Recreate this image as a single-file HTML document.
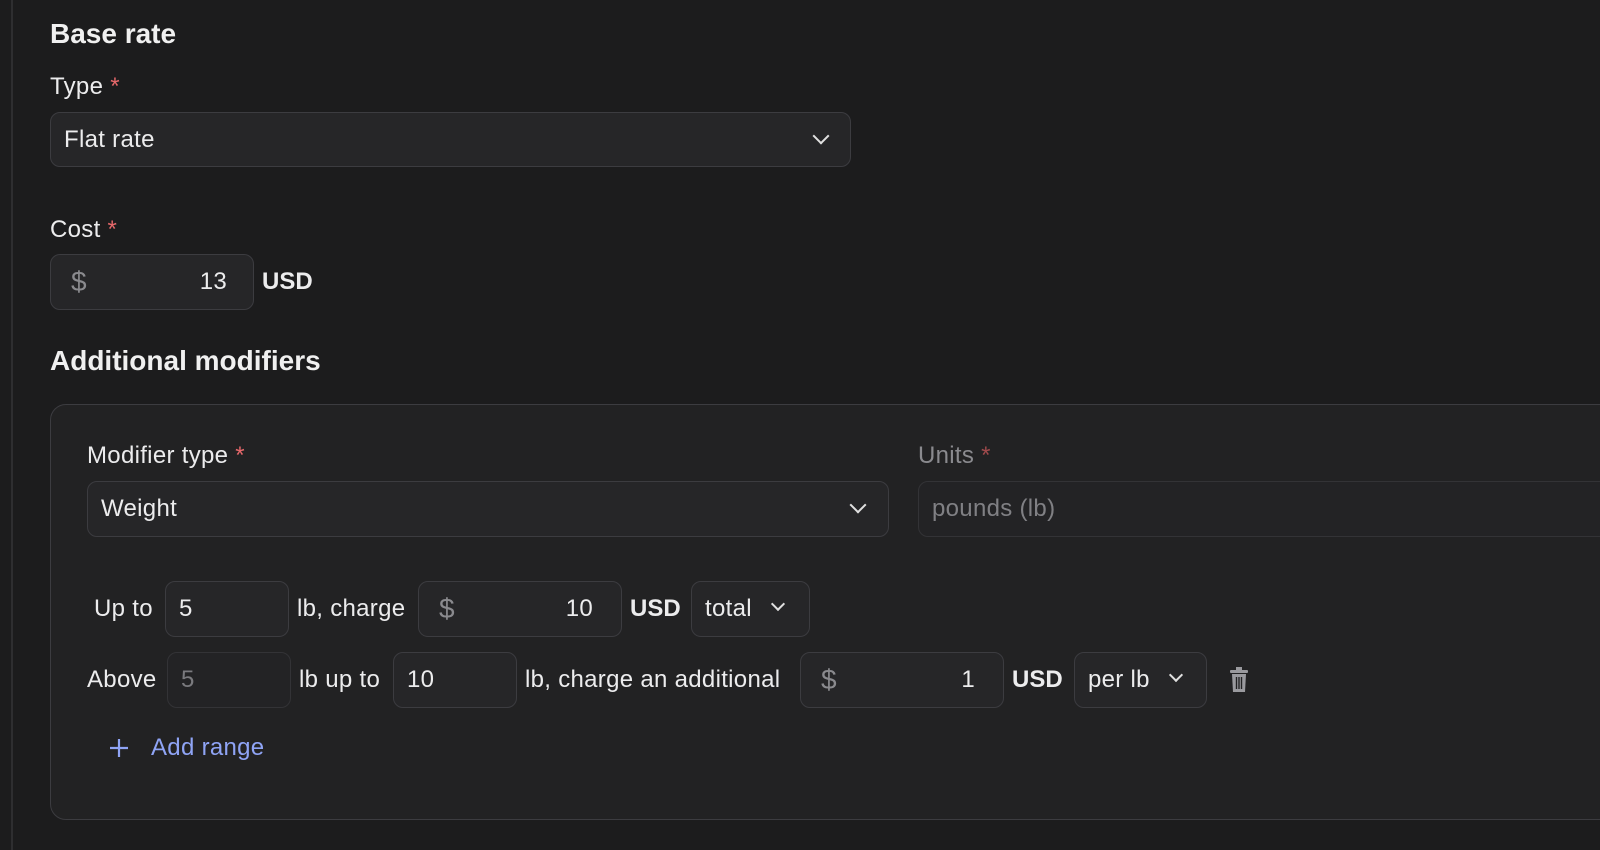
<!DOCTYPE html>
<html><head><style>
*{box-sizing:border-box;margin:0;padding:0}
body{width:1600px;height:850px;background:#1c1c1d;font-family:"Liberation Sans",sans-serif;color:#ececed;position:relative;overflow:hidden;font-size:24px;letter-spacing:0.3px}
.a{position:absolute;white-space:nowrap;line-height:28px}
.vl{position:absolute;left:11px;top:0;width:2px;height:850px;background:#2e2e30}
h2{position:absolute;font-size:28px;font-weight:bold;color:#f0f0f0;line-height:32px;letter-spacing:0}
.lbl{position:absolute;font-size:24px;line-height:28px}
.req{color:#e5686a}
.box{position:absolute;background:#262628;border:1.5px solid #3c3c40;border-radius:10px;display:flex;align-items:center;padding:0 13px;font-size:24px}
.card{position:absolute;left:50px;top:404px;width:1600px;height:416px;background:#222223;border:1.5px solid #3c3c40;border-radius:16px}
.chev{position:absolute;width:12px;height:12px;border-right:2px solid #e0e0e0;border-bottom:2px solid #e0e0e0;transform:rotate(45deg)}
.d{color:#8a8a8e}
.b{font-weight:bold;letter-spacing:0}
</style></head><body>
<div class="vl"></div>
<h2 style="left:50px;top:18px">Base rate</h2>
<div class="lbl" style="left:50px;top:73px">Type <span class="req">*</span></div>
<div class="box" style="left:50px;top:112px;width:801px;height:55px">Flat rate</div>
<div class="chev" style="left:815px;top:130px"></div>
<div class="lbl" style="left:50px;top:216px">Cost <span class="req">*</span></div>
<div class="box" style="left:50px;top:254px;width:204px;height:56px;justify-content:space-between;padding:0 26px 0 20px"><span class="d" style="font-size:28px">$</span><span>13</span></div>
<div class="a b" style="left:262px;top:268px">USD</div>
<h2 style="left:50px;top:345px">Additional modifiers</h2>
<div class="card"></div>
<div class="lbl" style="left:87px;top:442px">Modifier type <span class="req">*</span></div>
<div class="box" style="left:87px;top:481px;width:802px;height:56px">Weight</div>
<div class="chev" style="left:852px;top:499px"></div>
<div class="lbl" style="left:918px;top:442px;color:#8a8a8e">Units <span style="color:#a04a4c">*</span></div>
<div class="box" style="left:918px;top:481px;width:700px;height:56px;background:#232325;border-color:#333336;color:#808084">pounds (lb)</div>

<div class="a" style="left:94px;top:595px">Up to</div>
<div class="box" style="left:165px;top:581px;width:124px;height:56px">5</div>
<div class="a" style="left:297px;top:595px">lb, charge</div>
<div class="box" style="left:418px;top:581px;width:204px;height:56px;justify-content:space-between;padding:0 28px 0 20px"><span class="d" style="font-size:28px">$</span><span>10</span></div>
<div class="a b" style="left:630px;top:595px">USD</div>
<div class="box" style="left:691px;top:581px;width:119px;height:56px">total</div>
<div class="chev" style="left:773px;top:599px;width:10px;height:10px"></div>

<div class="a" style="left:87px;top:666px">Above</div>
<div class="box" style="left:167px;top:652px;width:124px;height:56px;background:#232325;border-color:#333336;color:#7a7a7e">5</div>
<div class="a" style="left:299px;top:666px">lb up to</div>
<div class="box" style="left:393px;top:652px;width:124px;height:56px">10</div>
<div class="a" style="left:525px;top:666px">lb, charge an additional</div>
<div class="box" style="left:800px;top:652px;width:204px;height:56px;justify-content:space-between;padding:0 28px 0 20px"><span class="d" style="font-size:28px">$</span><span>1</span></div>
<div class="a b" style="left:1012px;top:666px">USD</div>
<div class="box" style="left:1074px;top:652px;width:133px;height:56px">per lb</div>
<div class="chev" style="left:1171px;top:670px;width:10px;height:10px"></div>
<svg class="a" style="left:1228px;top:667px" width="22" height="26" viewBox="0 0 22 26"><rect x="2" y="3" width="18" height="3" rx="1" fill="#9a9a9e"/><rect x="8" y="0" width="6" height="3" fill="#9a9a9e"/><path d="M4 7h14l-1 18H5z" fill="#9a9a9e"/><path d="M8.5 10v12M11 10v12M13.5 10v12" stroke="#222223" stroke-width="1.4"/></svg>

<svg class="a" style="left:108px;top:737px" width="22" height="22"><path d="M11 2v18M2 11h18" stroke="#8fa4f5" stroke-width="2.2"/></svg>
<div class="a" style="left:151px;top:734px;color:#8fa4f5">Add range</div>
</body></html>
